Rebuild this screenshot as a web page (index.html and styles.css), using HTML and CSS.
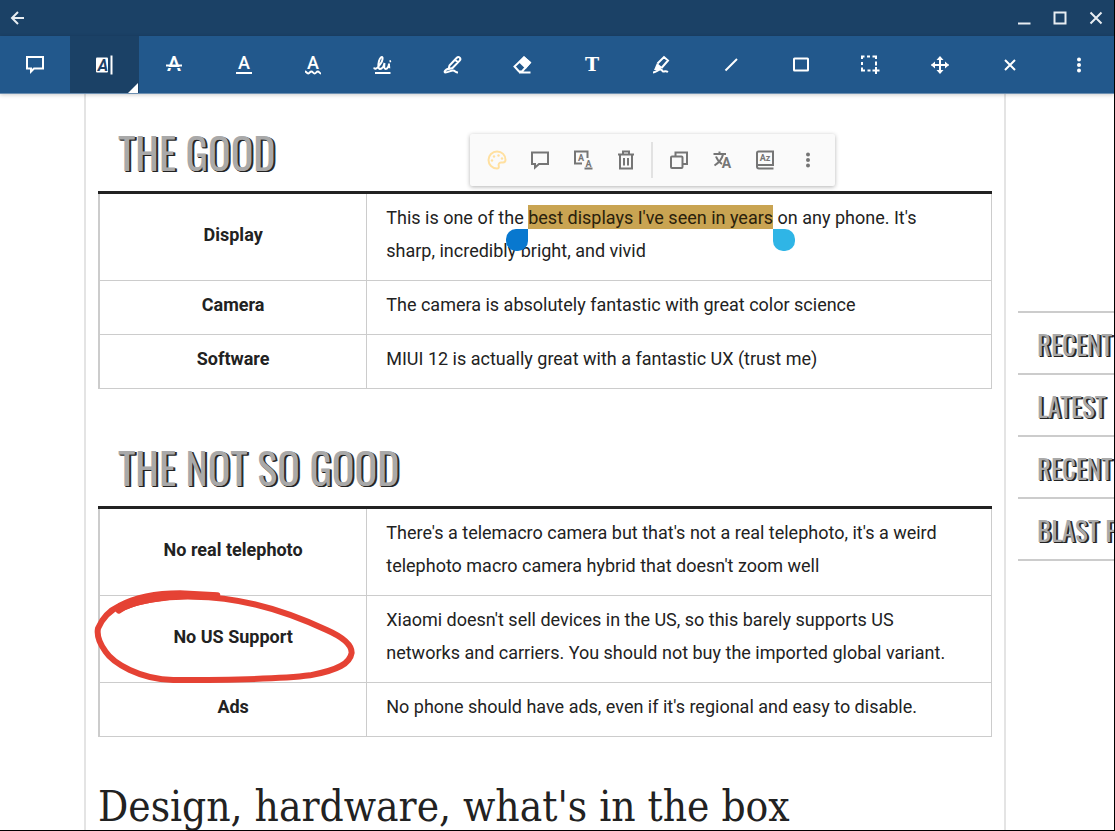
FILE: index.html
```
<!DOCTYPE html>
<html lang="en">
<head>
  <title>Web page annotation</title>
  <meta charset="utf-8">
  <meta name="viewport" content="width=device-width, initial-scale=1">
  <link rel="stylesheet" href="styles.css">
</head>
<body>

  <div class="app">
    <header class="titlebar">
      <button type="button" class="win-btn" aria-label="Back">
        <svg viewBox="0 0 24 24"><path d="M18 12H6.500M12 6l-6 6 6 6"/></svg>
      </button>
      <div class="win-controls">
        <button type="button" class="win-btn" aria-label="Minimize">
          <svg viewBox="0 0 24 24"><path d="M6 17.500h12.500"/></svg>
        </button>
        <button type="button" class="win-btn" aria-label="Maximize">
          <svg viewBox="0 0 24 24"><path d="M6.500 6.500h11v11h-11z"/></svg>
        </button>
        <button type="button" class="win-btn" aria-label="Close">
          <svg viewBox="0 0 24 24"><path d="M6.500 6.500l11 11M17.500 6.500l-11 11"/></svg>
        </button>
      </div>
    </header>

    <nav class="toolbar" aria-label="Annotation tools">
      <button type="button" aria-label="Note">
        <svg viewBox="0 0 24 24"><path d="M4 4h16v11.500h-9L8 18.500v-3H4z"/></svg>
      </button>
      <button type="button" class="active" aria-label="Highlight">
        <svg viewBox="0 0 24 24">
          <rect class="fill" x="4" y="4.500" width="12" height="15" rx="1"/>
          <text class="cutout" x="11" y="18" text-anchor="middle">A</text>
          <path d="M19.500 2.500v19"/>
        </svg>
      </button>
      <button type="button" aria-label="Strikeout">
        <svg viewBox="0 0 24 24"><text class="large" x="12" y="18" text-anchor="middle">A</text><path class="cut" d="M4 14.500h16"/><path d="M4 12.500h16"/></svg>
      </button>
      <button type="button" aria-label="Underline">
        <svg viewBox="0 0 24 24"><text x="12" y="16" text-anchor="middle">A</text><path d="M4 20h16"/></svg>
      </button>
      <button type="button" aria-label="Squiggly">
        <svg viewBox="0 0 24 24"><text x="12" y="16" text-anchor="middle">A</text><path d="M4 18.500c1.500 0 1.500 2 3.200 2s1.600-2 3.200-2 1.600 2 3.200 2 1.600-2 3.200-2 1.600 2 3.200 2"/></svg>
      </button>
      <button type="button" aria-label="Signature">
        <svg viewBox="0 0 24 24"><path d="M3 14.500c.5 2 2.500 1.500 4.500-1 2.500-3 4.500-7 4-9-.6-1.500-2.500 0-3.500 3.500-1 4-1 8 1 8 2.200 0 4-3.500 4.500-6-.5 3-.5 6 1 6 2 0 3.500-3 3.500-5.500 0 2-.3 4 1.200 4M18.500 8.500l1.500-.5M4 20h15.500"/></svg>
      </button>
      <button type="button" aria-label="Ink">
        <svg viewBox="0 0 24 24"><path d="M8.500 12.500L15.800 4.700c1-1 2-1 2.900 0s1 1.900 0 2.900L11.500 15l-4 1zM14 6.500l3 3M8 15.500c-4 1-5.500 4-3.500 4 3 0 5-2 7.500-2s2 2 5 2"/></svg>
      </button>
      <button type="button" aria-label="Eraser">
        <svg viewBox="0 0 24 24"><path class="fill" d="M14 3l7.200 6.500-5.500 6.500L8.500 9z"/><path d="M14 4.500L4.500 13.500l4.500 5h3L20 9.500zM9 19.500h11.500"/></svg>
      </button>
      <button type="button" aria-label="Text">
        <svg viewBox="0 0 24 24"><text class="serif" x="12" y="18" text-anchor="middle">T</text></svg>
      </button>
      <button type="button" aria-label="Free highlight">
        <svg viewBox="0 0 24 24"><path class="fill" d="M8 10l5.500 4.500-3 2.500H5z"/><path d="M8.500 10.500L15 4l4 3.500-6.500 7.500M4 19.500c3 0 5-3 7.500-3s1 2 3 2 2-1 4.500.5"/></svg>
      </button>
      <button type="button" aria-label="Line">
        <svg viewBox="0 0 24 24"><path d="M6.500 17.500L18 6"/></svg>
      </button>
      <button type="button" aria-label="Rectangle">
        <svg viewBox="0 0 24 24"><rect x="5" y="5.500" width="14" height="12" rx="0.500"/></svg>
      </button>
      <button type="button" aria-label="Multi-select">
        <svg viewBox="0 0 24 24"><path d="M4 6V3.500h2.500M9 3.500h3M14.500 3.500H18V6M4 9v3M4 14.500v3h3M9.500 17.500h3M18 8.500v4M18 14v7M14.500 17.500h7"/></svg>
      </button>
      <button type="button" aria-label="Pan">
        <svg viewBox="0 0 24 24"><path d="M12 4v16M3.500 12h17"/><path class="fill" d="M12 3l3.500 4h-7zM12 21l3.500-4h-7zM3 12L7 8.500v7zM21 12L17 8.500v7z"/></svg>
      </button>
      <button type="button" aria-label="Close toolbar">
        <svg viewBox="0 0 24 24"><path d="M7 7l10 10M17 7L7 17"/></svg>
      </button>
      <button type="button" aria-label="More">
        <svg viewBox="0 0 24 24"><g class="fill"><circle cx="12" cy="6.500" r="2"/><circle cx="12" cy="12" r="2"/><circle cx="12" cy="17.500" r="2"/></g></svg>
      </button>
    </nav>

    <main class="page">
      <article class="article">
        <h2 class="box-title">THE GOOD</h2>
        <table class="points">
          <tbody>
            <tr>
              <th scope="row">Display</th>
              <td>This is one of the <mark>best displays I've seen in years<span class="handle start"></span><span class="handle end"></span></mark> on any phone. It's<br>sharp, incredibly bright, and vivid</td>
            </tr>
            <tr>
              <th scope="row">Camera</th>
              <td>The camera is absolutely fantastic with great color science</td>
            </tr>
            <tr>
              <th scope="row">Software</th>
              <td>MIUI 12 is actually great with a fantastic UX (trust me)</td>
            </tr>
          </tbody>
        </table>

        <h2 class="box-title">THE NOT SO GOOD</h2>
        <table class="points">
          <tbody>
            <tr>
              <th scope="row">No real telephoto</th>
              <td>There's a telemacro camera but that's not a real telephoto, it's a weird<br>telephoto macro camera hybrid that doesn't zoom well</td>
            </tr>
            <tr>
              <th scope="row">No US Support
                <svg class="scribble" viewBox="0 0 900 345" aria-hidden="true">
                  <path d="M116 92C160 62 260 48 340 50C470 50 600 85 740 150C790 172 815 195 815 218C810 250 775 270 690 286C600 298 400 300 280 300C180 298 100 250 76 214C55 185 50 165 54 145C68 112 88 92 118 78C180 45 250 40 300 40L412 46"/>
                  <path d="M125 85C190 55 290 44 405 47"/>
                </svg>
              </th>
              <td>Xiaomi doesn't sell devices in the US, so this barely supports US<br>networks and carriers. You should not buy the imported global variant.</td>
            </tr>
            <tr>
              <th scope="row">Ads</th>
              <td>No phone should have ads, even if it's regional and easy to disable.</td>
            </tr>
          </tbody>
        </table>

        <h1>Design, hardware, what's in the box</h1>
      </article>

      <aside class="sidebar">
        <ul>
          <li>RECENT</li>
          <li>LATEST</li>
          <li>RECENT</li>
          <li>BLAST F</li>
        </ul>
      </aside>

      <div class="popup" role="toolbar" aria-label="Selection">
        <button type="button" aria-label="Color">
          <svg class="palette" viewBox="0 0 24 24"><path d="M12 3.500a8.500 8.500 0 0 0 0 17c1.500 0 2-1 1.800-2.200-.6-2 .2-3.800 2.200-3.800h2c1.500 0 2.500-1 2.500-2.700C20.500 7 17 3.500 12 3.500z"/><g class="fill"><circle cx="7" cy="12.500" r="1.200"/><circle cx="9" cy="8.500" r="1.200"/><circle cx="13.500" cy="7.500" r="1.200"/><circle cx="17" cy="10.500" r="1.200"/></g></svg>
        </button>
        <button type="button" aria-label="Comment">
          <svg viewBox="0 0 24 24"><path d="M4 4.500h16v11.500h-9l-4 3.500V16H4z"/></svg>
        </button>
        <button type="button" aria-label="Change type">
          <svg viewBox="0 0 24 24"><path d="M11 15.500H4v-12h12.500V10M13.500 20.500h8"/><text class="small" x="10" y="13" text-anchor="middle">A</text><text class="small" x="17.500" y="19" text-anchor="middle">A</text></svg>
        </button>
        <button type="button" aria-label="Delete">
          <svg viewBox="0 0 24 24"><path d="M4 6.500h16M9 6V3.500h6V6M6 7v13.500h12V7M10 10v7.500M14 10v7.500"/></svg>
        </button>
        <span class="divider"></span>
        <button type="button" aria-label="Copy">
          <svg viewBox="0 0 24 24"><rect x="4" y="8.500" width="11.500" height="11.500" rx="1"/><path d="M8.500 8V4.500h11.500v11.500H16"/></svg>
        </button>
        <button type="button" aria-label="Translate">
          <svg viewBox="0 0 24 24"><path d="M3.500 6h12.500M9.500 3.500V6M6 8.500c1.500 4 3.500 6 6 7.500M13 6.500c-1 4-4.500 8.500-8.500 11"/><text class="medium" x="16.500" y="20" text-anchor="middle">A</text></svg>
        </button>
        <button type="button" aria-label="Dictionary">
          <svg viewBox="0 0 24 24"><path d="M20.500 20.500H6c-1.200 0-2-.8-2-2V5c0-1 .6-1.500 1.500-1.500h14.500V17H4.500"/><text class="small" x="12" y="13" text-anchor="middle">Az</text></svg>
        </button>
        <button type="button" aria-label="More options">
          <svg viewBox="0 0 24 24"><g class="fill"><circle cx="12" cy="6.500" r="2"/><circle cx="12" cy="12" r="2"/><circle cx="12" cy="17.500" r="2"/></g></svg>
        </button>
      </div>
    </main>
  </div>

</body>
</html>
```
FILE: styles.css
```
* {
  box-sizing: border-box;
}

body {
  margin: 0;
  font-family: Roboto, "Liberation Sans", sans-serif;
  font-size: 18px;
  color: #222;
  background: #fff;
}

button {
  padding: 0;
  border: 0;
  background: none;
  color: inherit;
  display: flex;
  align-items: center;
  justify-content: center;
}

svg {
  width: 24px;
  height: 24px;
  fill: none;
  stroke: currentColor;
  stroke-width: 2;
}

svg text {
  font-family: Roboto, sans-serif;
  font-size: 18px;
  font-weight: 500;
  fill: currentColor;
  stroke: none;
}

svg .fill {
  fill: currentColor;
  stroke: none;
}

svg .cutout {
  fill: #1b4166;
  font-style: italic;
  font-weight: 700;
  font-size: 16px;
}

svg .large {
  font-size: 21px;
}

svg .cut {
  stroke: #22588c;
  stroke-width: 1;
}

svg .serif {
  font-family: "Roboto Slab", "DejaVu Serif", serif;
  font-size: 19px;
  font-weight: 700;
}

svg .small {
  font-size: 9px;
  font-weight: 700;
}

svg .medium {
  font-size: 14px;
  font-weight: 700;
}

.app {
  height: 100vh;
  display: flex;
  flex-direction: column;
  overflow: hidden;
  border-right: 1px solid #000;
  border-bottom: 1px solid #000;
}

/* window title bar */
.titlebar {
  flex: none;
  height: 36px;
  display: flex;
  align-items: center;
  justify-content: space-between;
  background: #1b4166;
  color: #e8edf2;
}

.win-btn {
  width: 36px;
  height: 36px;
}

.win-controls {
  display: flex;
}

/* annotation tools */
.toolbar {
  flex: none;
  height: 58px;
  display: flex;
  background: #22588c;
  color: #fff;
  border-bottom: 1px solid #6c8fb1;
  box-shadow: 0 1px 4px rgba(0, 0, 0, .2);
  z-index: 1;
}

.toolbar button {
  flex: 1;
}

.toolbar .active {
  position: relative;
  background: #1b4166;
}

.toolbar .active::after {
  content: "";
  position: absolute;
  right: 1px;
  bottom: 0;
  border-left: 10px solid transparent;
  border-bottom: 10px solid #fff;
}

/* web page */
.page {
  position: relative;
  flex: 1;
  min-height: 0;
  display: flex;
  overflow: hidden;
  padding-left: 84px;
}

.article {
  flex: 1;
  padding: 0 12px;
  border-left: 2px solid #e4e4e4;
  border-right: 2px solid #e4e4e4;
}

.box-title {
  margin: 48px 0 9px;
  padding-left: 20px;
  font-family: Oswald, "Liberation Sans Narrow", sans-serif;
  font-size: 42px;
  font-weight: 400;
  line-height: 60px;
  color: #a9a9a9;
  text-shadow: 1px 1px 0 #222, 2px 1px 0 #333;
}

.box-title:first-child {
  margin-top: 28px;
}

.points {
  width: 100%;
  border-collapse: collapse;
  border: 1px solid #ccc;
  border-left: 2px solid #ccc;
  border-top: 3px solid #222;
  line-height: 33px;
}

.points th,
.points td {
  padding: 7px 19px 13px;
  border: 1px solid #ccc;
}

.points tr:first-child > * {
  border-top: 3px solid #222;
}

.points th {
  position: relative;
  width: 30%;
  font-weight: 700;
}

.points td {
  text-align: left;
}

mark {
  position: relative;
  padding: 2px 0 1px;
  background: #c9a452;
  color: #2a210c;
}

.handle {
  position: absolute;
  top: 100%;
  width: 22px;
  height: 22px;
}

.start {
  right: 100%;
  background: #0878cf;
  border-radius: 10px 0 10px 10px;
}

.end {
  left: 100%;
  background: #2fb5e6;
  border-radius: 0 10px 10px 10px;
}

.scribble {
  position: absolute;
  left: -20px;
  top: -16px;
  width: 300px;
  height: 115px;
  stroke: #e54234;
  stroke-width: 18;
  stroke-linecap: round;
  stroke-linejoin: round;
  z-index: 1;
}

h1 {
  margin: 42px 0 0;
  font-family: "Roboto Slab", "DejaVu Serif Condensed", serif;
  font-size: 42px;
  font-weight: 400;
  line-height: 56px;
  white-space: nowrap;
}

.sidebar {
  flex: 0 0 108px;
  padding: 217px 0 0 12px;
  overflow: hidden;
}

.sidebar ul {
  margin: 0;
  padding: 0;
  list-style: none;
  border-top: 2px solid #ccc;
}

.sidebar li {
  height: 62px;
  padding-left: 19px;
  border-bottom: 2px solid #ccc;
  font-family: Oswald, "Liberation Sans Narrow", sans-serif;
  font-size: 27px;
  line-height: 62px;
  white-space: nowrap;
  color: #a9a9a9;
  text-shadow: 1px 1px 0 #222, 2px 1px 0 #333;
}

/* floating menu over the selected text */
.popup {
  position: absolute;
  left: 470px;
  top: 40px;
  padding: 0 6px 0 5px;
  display: flex;
  align-items: center;
  background: #fafafa;
  border-radius: 2px;
  box-shadow: 0 1px 4px rgba(0, 0, 0, .3);
  color: #757575;
}

.popup button {
  width: 43px;
  height: 52px;
}

.popup .palette {
  color: #ffe0a0;
}

.popup .divider {
  width: 2px;
  height: 36px;
  margin: 0 4px;
  background: #e2e2e2;
}
```
